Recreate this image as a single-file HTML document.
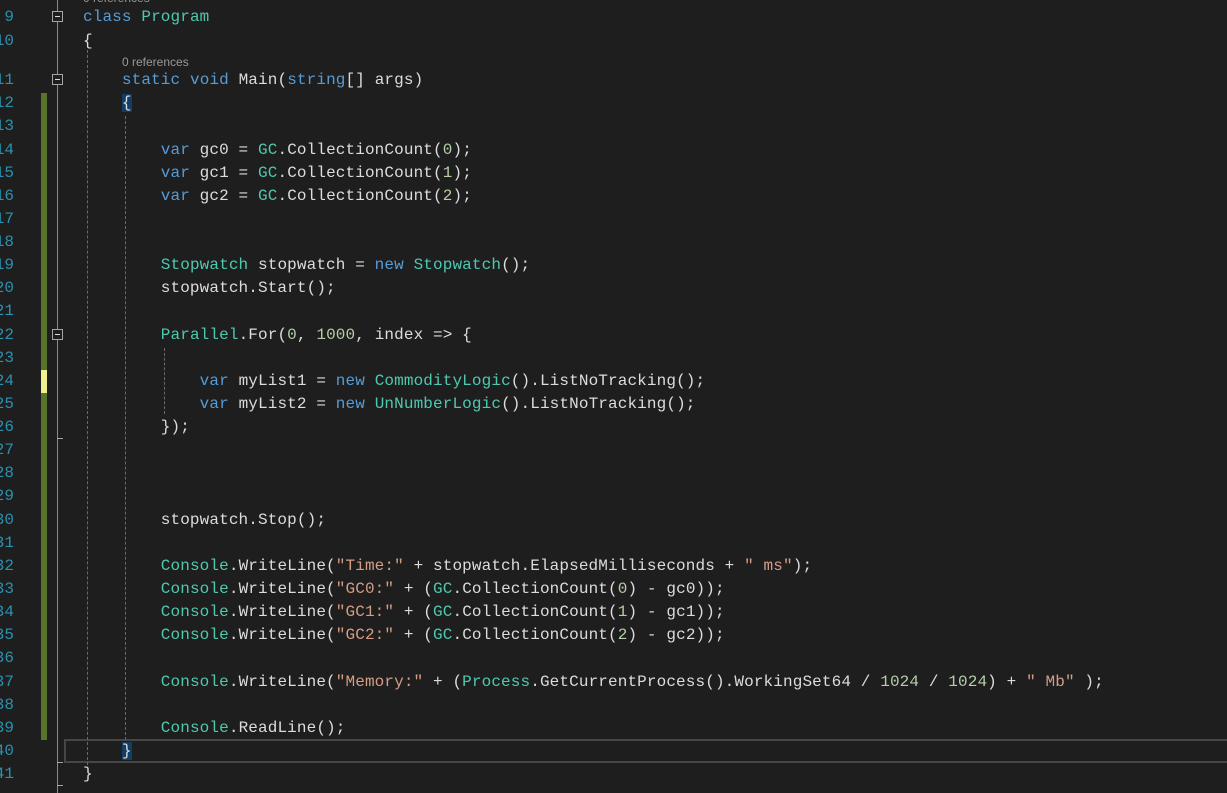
<!DOCTYPE html>
<html><head><meta charset="utf-8"><style>
html,body{margin:0;padding:0;background:#1e1e1e;width:1227px;height:793px;overflow:hidden;position:relative}
.l{position:absolute;left:83px;height:23px;line-height:23px;margin-top:2px;font-family:"Liberation Mono",monospace;font-size:16px;letter-spacing:0.12px;color:#dcdcdc;white-space:pre}
.n{position:absolute;left:-40px;width:54px;margin-top:2px;text-align:right;height:23px;line-height:23px;font-family:"Liberation Mono",monospace;font-size:16px;color:#2b91af}
.k{color:#569cd6}.t{color:#4ec9b0}.s{color:#d69d85}.m{color:#b5cea8}
.cl{position:absolute;font-family:"Liberation Sans",sans-serif;font-size:12px;color:#999}
.g{position:absolute;border-left:1px dashed #6a6a6a;width:0}
.fb{position:absolute;left:52px;width:9px;height:9px;border:1px solid #a5a5a5;background:#1e1e1e}
.fb:after{content:"";position:absolute;left:2px;top:4px;width:5px;height:1px;background:#dcdcdc}
.fe{position:absolute;left:57px;width:6px;height:1px;background:#a5a5a5}
.br{background:#123e66}
</style></head><body>
<div style="position:absolute;left:57px;top:0;width:1px;height:793px;background:#8a8a8a"></div>
<div style="position:absolute;left:41px;top:93px;width:6px;height:647px;background:#57732c"></div>
<div style="position:absolute;left:41px;top:370px;width:6px;height:23px;background:#eff08e"></div>
<div style="position:absolute;left:64px;top:739px;width:1165px;height:20px;border:2px solid #464646"></div>
<div class="g" style="left:87px;top:50px;height:715px"></div>
<div class="g" style="left:125px;top:116px;height:624px"></div>
<div class="g" style="left:164px;top:348px;height:66px"></div>
<div class="fb" style="top:11px"></div>
<div class="fb" style="top:74px"></div>
<div class="fb" style="top:329px"></div>
<div class="fe" style="top:438px"></div>
<div class="fe" style="top:762px"></div>
<div class="fe" style="top:785px"></div>
<div class="cl" style="left:83px;top:-9px">0 references</div>
<div class="cl" style="left:122px;top:55px">0 references</div>

<div class="n" style="top:4px">9</div><div class="l" style="top:4px"><span class="k">class</span> <span class="t">Program</span></div>
<div class="n" style="top:28px">10</div><div class="l" style="top:28px">{</div>
<div class="n" style="top:67px">11</div><div class="l" style="top:67px">    <span class="k">static</span> <span class="k">void</span> Main(<span class="k">string</span>[] args)</div>
<div class="n" style="top:90px">12</div><div class="l" style="top:90px">    <span class="br">{</span></div>
<div class="n" style="top:113px">13</div>
<div class="n" style="top:137px">14</div><div class="l" style="top:137px">        <span class="k">var</span> gc0 = <span class="t">GC</span>.CollectionCount(<span class="m">0</span>);</div>
<div class="n" style="top:160px">15</div><div class="l" style="top:160px">        <span class="k">var</span> gc1 = <span class="t">GC</span>.CollectionCount(<span class="m">1</span>);</div>
<div class="n" style="top:183px">16</div><div class="l" style="top:183px">        <span class="k">var</span> gc2 = <span class="t">GC</span>.CollectionCount(<span class="m">2</span>);</div>
<div class="n" style="top:206px">17</div>
<div class="n" style="top:229px">18</div>
<div class="n" style="top:252px">19</div><div class="l" style="top:252px">        <span class="t">Stopwatch</span> stopwatch = <span class="k">new</span> <span class="t">Stopwatch</span>();</div>
<div class="n" style="top:275px">20</div><div class="l" style="top:275px">        stopwatch.Start();</div>
<div class="n" style="top:298px">21</div>
<div class="n" style="top:322px">22</div><div class="l" style="top:322px">        <span class="t">Parallel</span>.For(<span class="m">0</span>, <span class="m">1000</span>, index =&gt; {</div>
<div class="n" style="top:345px">23</div>
<div class="n" style="top:368px">24</div><div class="l" style="top:368px">            <span class="k">var</span> myList1 = <span class="k">new</span> <span class="t">CommodityLogic</span>().ListNoTracking();</div>
<div class="n" style="top:391px">25</div><div class="l" style="top:391px">            <span class="k">var</span> myList2 = <span class="k">new</span> <span class="t">UnNumberLogic</span>().ListNoTracking();</div>
<div class="n" style="top:414px">26</div><div class="l" style="top:414px">        });</div>
<div class="n" style="top:437px">27</div>
<div class="n" style="top:460px">28</div>
<div class="n" style="top:483px">29</div>
<div class="n" style="top:507px">30</div><div class="l" style="top:507px">        stopwatch.Stop();</div>
<div class="n" style="top:530px">31</div>
<div class="n" style="top:553px">32</div><div class="l" style="top:553px">        <span class="t">Console</span>.WriteLine(<span class="s">"Time:"</span> + stopwatch.ElapsedMilliseconds + <span class="s">" ms"</span>);</div>
<div class="n" style="top:576px">33</div><div class="l" style="top:576px">        <span class="t">Console</span>.WriteLine(<span class="s">"GC0:"</span> + (<span class="t">GC</span>.CollectionCount(<span class="m">0</span>) - gc0));</div>
<div class="n" style="top:599px">34</div><div class="l" style="top:599px">        <span class="t">Console</span>.WriteLine(<span class="s">"GC1:"</span> + (<span class="t">GC</span>.CollectionCount(<span class="m">1</span>) - gc1));</div>
<div class="n" style="top:622px">35</div><div class="l" style="top:622px">        <span class="t">Console</span>.WriteLine(<span class="s">"GC2:"</span> + (<span class="t">GC</span>.CollectionCount(<span class="m">2</span>) - gc2));</div>
<div class="n" style="top:645px">36</div>
<div class="n" style="top:669px">37</div><div class="l" style="top:669px">        <span class="t">Console</span>.WriteLine(<span class="s">"Memory:"</span> + (<span class="t">Process</span>.GetCurrentProcess().WorkingSet64 / <span class="m">1024</span> / <span class="m">1024</span>) + <span class="s">" Mb"</span> );</div>
<div class="n" style="top:692px">38</div>
<div class="n" style="top:715px">39</div><div class="l" style="top:715px">        <span class="t">Console</span>.ReadLine();</div>
<div class="n" style="top:738px">40</div><div class="l" style="top:738px">    <span class="br">}</span></div>
<div class="n" style="top:761px">41</div><div class="l" style="top:761px">}</div>
</body></html>
